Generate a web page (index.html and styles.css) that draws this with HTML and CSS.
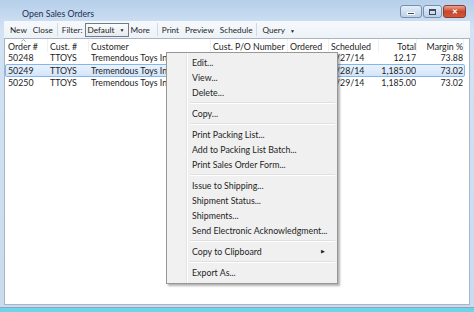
FILE: index.html
```html
<!DOCTYPE html>
<html lang="en">

<head>
    <meta charset="UTF-8">
    <title>Open Sales Orders</title>
    <link rel="stylesheet" href="styles.css">
</head>

<body>
    <div class="window">
        <div class="titleBar">
            <span class="title">Open Sales Orders</span>
            <div class="winButtons">
                <span class="winBtn minBtn"><span class="minBar"></span></span>
                <span class="winBtn maxBtn"><span class="maxBox"></span></span>
                <span class="winBtn closeBtn">&#x2715;</span>
            </div>
        </div>
        <div class="toolbar">
            <span class="tool">New</span>
            <span class="tool">Close</span>
            <span class="sep"></span>
            <span class="tool filterLabel">Filter:</span>
            <span class="combo">Default <span class="arrow">&#9660;</span></span>
            <span class="tool moreTool">More</span>
            <span class="sep"></span>
            <span class="tool">Print</span>
            <span class="tool">Preview</span>
            <span class="tool">Schedule</span>
            <span class="sep"></span>
            <span class="tool queryTool">Query <span class="arrow">&#9660;</span></span>
        </div>
        <div class="listArea">
            <div class="row header">
                <span class="c1 sorted">Order #<svg class="sortMark" width="5" height="3" viewBox="0 0 5 3"><path d="M0.5 2.5 L2.5 0.5 L4.5 2.5" fill="none" stroke="#8a9bb0" stroke-width="0.8"/></svg></span>
                <span class="c2">Cust. #</span>
                <span class="c3">Customer</span>
                <span class="c4">Cust. P/O Number</span>
                <span class="c5">Ordered</span>
                <span class="c6">Scheduled</span>
                <span class="c7">Total</span>
                <span class="c8">Margin %</span>
            </div>
            <div class="row">
                <span class="c1">50248</span>
                <span class="c2">TTOYS</span>
                <span class="c3">Tremendous Toys Incorporated</span>
                <span class="c4"></span>
                <span class="c5">1/27/14</span>
                <span class="c6">1/27/14</span>
                <span class="c7">12.17</span>
                <span class="c8">73.88</span>
            </div>
            <div class="row selected">
                <span class="c1">50249</span>
                <span class="c2">TTOYS</span>
                <span class="c3">Tremendous Toys Incorporated</span>
                <span class="c4"></span>
                <span class="c5">1/28/14</span>
                <span class="c6">1/28/14</span>
                <span class="c7">1,185.00</span>
                <span class="c8">73.02</span>
            </div>
            <div class="row">
                <span class="c1">50250</span>
                <span class="c2">TTOYS</span>
                <span class="c3">Tremendous Toys Incorporated</span>
                <span class="c4"></span>
                <span class="c5">1/29/14</span>
                <span class="c6">1/29/14</span>
                <span class="c7">1,185.00</span>
                <span class="c8">73.02</span>
            </div>
        </div>
    </div>

    <div class="contextMenu">
        <div class="item">Edit...</div>
        <div class="item">View...</div>
        <div class="item">Delete...</div>
        <div class="menuSep"></div>
        <div class="item">Copy...</div>
        <div class="menuSep"></div>
        <div class="item">Print Packing List...</div>
        <div class="item">Add to Packing List Batch...</div>
        <div class="item">Print Sales Order Form...</div>
        <div class="menuSep"></div>
        <div class="item">Issue to Shipping...</div>
        <div class="item">Shipment Status...</div>
        <div class="item">Shipments...</div>
        <div class="item">Send Electronic Acknowledgment...</div>
        <div class="menuSep"></div>
        <div class="item sub">Copy to Clipboard <span class="subArrow">&#9654;</span></div>
        <div class="menuSep"></div>
        <div class="item">Export As...</div>
    </div>
</body>

</html>
```

FILE: styles.css
```css
body {
    margin: 0;
    font-family: "Lato", sans-serif;
    font-size: 8.8px;
    color: #1e1e1e;
    background-color: #6fd4ea;
    width: 474px;
    height: 312px;
    overflow: hidden;
}

.window {
    height: 305px;
    display: flex;
    flex-direction: column;
    padding: 0 4px 2px 4px;
    background: linear-gradient(#b6cfea, #d3e3f4 30px, #c8dbef);
    border-bottom: 1px solid #8fa6bf;
}

.titleBar {
    height: 21px;
    display: flex;
    justify-content: space-between;
}

.title {
    padding-left: 18px;
    padding-top: 8px;
    font-size: 8.8px;
    color: #1c2f55;
}

.winButtons {
    display: flex;
    gap: 1px;
    padding-top: 5px;
    padding-right: 4px;
}

.winBtn {
    height: 11px;
    border: 1px solid #7990ad;
    border-radius: 3px;
    display: flex;
    align-items: center;
    justify-content: center;
    background: linear-gradient(#e4eefa, #bcd0ea);
}

.minBtn {
    width: 20px;
}

.maxBtn {
    width: 17px;
}

.closeBtn {
    width: 21px;
    color: #fff;
    font-size: 7px;
    font-weight: bold;
    background: linear-gradient(#e8a593, #c9462c 50%, #d2573c);
    border-color: #8b3a2d;
}

.minBar {
    width: 6px;
    height: 1px;
    margin-top: 3px;
    background: #3c4a5c;
    border: 1px solid #fff;
}

.maxBox {
    width: 5px;
    height: 3px;
    border: 1px solid #3c4a5c;
    border-top-width: 2px;
}

.toolbar {
    height: 17px;
    display: flex;
    align-items: center;
    font-size: 8.2px;
    background: linear-gradient(#f6f9fc, #edf2f8);
    padding-left: 3px;
}

.tool {
    padding: 0 3px;
}

.filterLabel {
    padding-right: 2px;
}

.moreTool {
    padding: 0 6px 0 2px;
}

.queryTool {
    padding-left: 4px;
}

.sep {
    width: 1px;
    height: 13px;
    margin: 0 1px;
    background: #d2d9e1;
}

.combo {
    border: 1px solid #6f7c8c;
    height: 12px;
    width: 40px;
    padding: 0 0 0 2px;
    line-height: 12px;
    background: linear-gradient(#fbfcfd, #e6eaef);
    display: flex;
    justify-content: space-between;
}

.arrow {
    font-size: 5px;
    padding-left: 3px;
    padding-right: 3px;
}

.listArea {
    flex: 1;
    background-color: #fff;
    border: 1px solid #a7b5c4;
}

.row {
    display: flex;
    height: 12px;
    line-height: 12px;
    margin: 0 4px 0 0;
}

.row span {
    white-space: nowrap;
    overflow: hidden;
    padding-left: 3px;
    flex: none;
}

.header {
    height: 13px;
    line-height: 15px;
}

.header span {
    border-right: 1px solid #eef1f4;
    margin-right: -1px;
}

.sorted {
    position: relative;
}

.sortMark {
    position: absolute;
    left: 16px;
    top: 0;
}

.selected {
    background: linear-gradient(#e9f2fd, #d3e5fa);
    border: 1px solid #86b5ea;
    height: 11px;
    line-height: 11px;
    border-radius: 2px;
}

.selected span:first-child {
    padding-left: 2px;
}

.c1 { width: 39px; }
.c2 { width: 38px; }
.c3 { width: 119px; }
.c4 { width: 74px; }
.c5 { width: 38px; }
.c6 { width: 47px; }
.c7 { width: 35px; text-align: right; }
.c8 { width: 44px; text-align: right; }

.contextMenu {
    position: absolute;
    left: 166px;
    top: 52px;
    width: 166px;
    padding: 2px 2px 3px 2px;
    background: linear-gradient(to right, #f1f1f1 19px, #e2e3e3 19px, #e2e3e3 20px, #fff 20px, #fff 21px, #f0f0f0 21px);
    border: 1px solid #979797;
    box-shadow: 2px 2px 2px rgba(0, 0, 0, 0.3);
}

.item {
    height: 15px;
    line-height: 15px;
    padding-left: 23px;
    display: flex;
    justify-content: space-between;
}

.subArrow {
    font-size: 5px;
    padding-right: 10px;
}

.menuSep {
    height: 1px;
    margin: 2px 0 2px 21px;
    background: #e0e0e0;
    border-bottom: 1px solid #fff;
}
```
